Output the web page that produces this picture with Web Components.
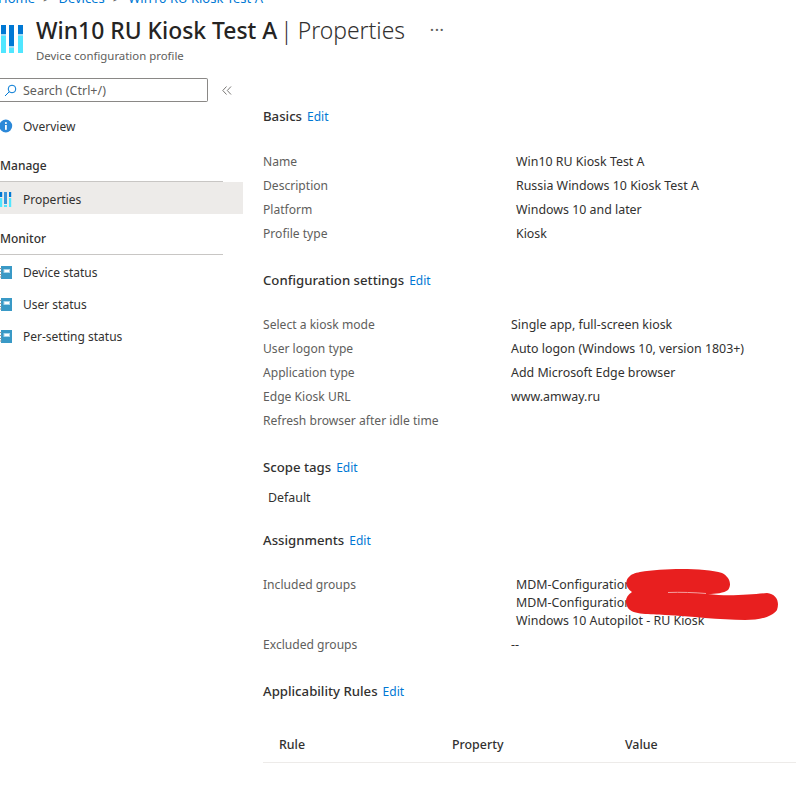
<!DOCTYPE html>
<html>
<head>
<meta charset="utf-8">
<style>
    html, body{ margin: 0; height: 100%; overflow: hidden; background: #fff; }
    body{
        font-family: "Noto Sans", "Open Sans", sans-serif;
        font-size: 12px;
        color: #323130;
        width: 796px;
        height: 803px;
        position: relative;
    }
    .page{ display: flex; }
</style>
</head>
<body>
<az-breadcrumb></az-breadcrumb>
<az-title heading="Win10 RU Kiosk Test A" blade="Properties" sub="Device configuration profile"></az-title>
<div class="page">
    <az-sidebar>
        <az-nav icon="info">Overview</az-nav>
        <az-group style="margin-top: 13px">Manage</az-group>
        <az-nav icon="bars" active>Properties</az-nav>
        <az-group style="margin-top: 14px; margin-bottom: 1px">Monitor</az-group>
        <az-nav icon="book">Device status</az-nav>
        <az-nav icon="book">User status</az-nav>
        <az-nav icon="book">Per-setting status</az-nav>
    </az-sidebar>
    <az-content>
        <az-section heading="Basics" gap="27" after="23">
            <az-row label="Name" value="Win10 RU Kiosk Test A"></az-row>
            <az-row label="Description" value="Russia Windows 10 Kiosk Test A"></az-row>
            <az-row label="Platform" value="Windows 10 and later"></az-row>
            <az-row label="Profile type" value="Kiosk"></az-row>
        </az-section>
        <az-section heading="Configuration settings" gap="26" after="23">
            <az-row col="248" label="Select a kiosk mode" value="Single app, full-screen kiosk"></az-row>
            <az-row col="248" label="User logon type" value="Auto logon (Windows 10, version 1803+)"></az-row>
            <az-row col="248" label="Application type" value="Add Microsoft Edge browser"></az-row>
            <az-row col="248" label="Edge Kiosk URL" value="www.amway.ru"></az-row>
            <az-row col="248" label="Refresh browser after idle time" value=""></az-row>
        </az-section>
        <az-section heading="Scope tags" gap="12" after="19">
            <az-row col="5" label="" value="Default"></az-row>
        </az-section>
        <az-section heading="Assignments" gap="26" after="23">
            <az-row h="18" label="Included groups" value="MDM-Configuration"></az-row>
            <az-row h="18" label="" value="MDM-Configuration"></az-row>
            <az-row label="" value="Windows 10 Autopilot - RU Kiosk"></az-row>
            <az-row col="248" label="Excluded groups" value="--"></az-row>
        </az-section>
        <az-section heading="Applicability Rules" gap="26" after="0">
            <az-table columns="Rule,Property,Value"></az-table>
        </az-section>
    </az-content>
</div>
<az-scribble></az-scribble>
<script>
const ICONS = {
    info: `<svg width="13" height="14" viewBox="0 0 13 14"><circle cx="5.8" cy="7" r="6.4" fill="#2b88d8"/><rect x="5" y="6" width="1.8" height="4.8" fill="#fff"/><rect x="5" y="3.2" width="1.8" height="1.7" fill="#fff"/></svg>`,
    bars: `<svg width="12" height="15" viewBox="0 0 12 15"><rect x="0" y="0" width="2.2" height="5" fill="#0078d4"/><rect x="0" y="6" width="2.2" height="9" fill="#50e6ff"/><rect x="4" y="0" width="3" height="12" fill="#0078d4" opacity=".75"/><rect x="4" y="13" width="3" height="2" fill="#50e6ff"/><rect x="9" y="0" width="2.2" height="5" fill="#0078d4"/><rect x="9" y="6" width="2.2" height="9" fill="#50e6ff"/></svg>`,
    book: `<svg width="13" height="13" viewBox="0 0 13 13"><rect x="1" y="0" width="11" height="13" fill="#3999c6"/><rect x="0" y="2" width="1.5" height="1" fill="#9a9a9a"/><rect x="0" y="5" width="1.5" height="1" fill="#9a9a9a"/><rect x="0" y="8" width="1.5" height="1" fill="#9a9a9a"/><rect x="0" y="10.5" width="1.5" height="1" fill="#9a9a9a"/><rect x="3.5" y="3" width="6.5" height="4" fill="#a9d5ea"/><rect x="4.5" y="4" width="4.5" height="2" fill="#fff"/></svg>`
};

class AzBreadcrumb extends HTMLElement{
    constructor(){
        super();
        this.attachShadow({ mode: 'open' });
        this.shadowRoot.innerHTML = `
            <style>
                :host{ display: block; height: 7px; overflow: hidden; }
                div{
                    display: flex;
                    gap: 8px;
                    margin: -10px 0 0 -2px;
                    line-height: 17px;
                    font-size: 13px;
                    color: #0078d4;
                    white-space: nowrap;
                }
                span.sep{ color: #605e5c; }
            </style>
            <div><span>Home</span><span class="sep">&gt;</span><span>Devices</span><span class="sep">&gt;</span><span>Win10 RU Kiosk Test A</span></div>
        `;
    }
}
customElements.define('az-breadcrumb', AzBreadcrumb);

class AzTitle extends HTMLElement{
    constructor(){
        super();
        this.attachShadow({ mode: 'open' });
    }
    connectedCallback(){
        this.shadowRoot.innerHTML = `
            <style>
                :host{ display: flex; height: 71px; box-sizing: border-box; padding-top: 10px; }
                .logo{ width: 36px; padding-top: 8px; flex: none; }
                .logo svg{ display: block; }
                h1{
                    margin: 0;
                    font-size: 22.9px;
                    line-height: 28px;
                    font-weight: 500;
                    color: #252423;
                    white-space: nowrap;
                    display: flex;
                    align-items: center;
                }
                h1 .blade{ font-weight: 300; margin-left: 3px; word-spacing: -1px; color: #323130; }
                h1 .more{ font-size: 14px; margin-left: 25px; margin-top: -3px; letter-spacing: 1px; font-weight: 600; color: #605e5c; }
                p{ margin: 3px 0 0; font-size: 11.4px; line-height: 16px; color: #605e5c; }
            </style>
            <div class="logo">
                <svg width="24" height="28" viewBox="0 0 24 28">
                    <rect x="1" y="0" width="5" height="9" fill="#0078d4"/>
                    <rect x="1" y="9" width="5" height="2" fill="#9fdcf5"/>
                    <rect x="1" y="11" width="5" height="17" fill="#50e6ff"/>
                    <rect x="9" y="0" width="5" height="21" fill="#0078d4"/>
                    <rect x="9" y="21" width="5" height="2" fill="#9fdcf5"/>
                    <rect x="9" y="23" width="5" height="5" fill="#50e6ff"/>
                    <rect x="18" y="0" width="5" height="9" fill="#0078d4"/>
                    <rect x="18" y="9" width="5" height="2" fill="#9fdcf5"/>
                    <rect x="18" y="11" width="5" height="17" fill="#50e6ff"/>
                </svg>
            </div>
            <div>
                <h1>${this.getAttribute('heading')}<span class="blade">| ${this.getAttribute('blade')}</span><span class="more">···</span></h1>
                <p>${this.getAttribute('sub')}</p>
            </div>
        `;
    }
}
customElements.define('az-title', AzTitle);

class AzSidebar extends HTMLElement{
    constructor(){
        super();
        this.attachShadow({ mode: 'open' });
        this.shadowRoot.innerHTML = `
            <style>
                :host{ display: block; width: 243px; flex: none; }
                .top{ display: flex; align-items: center; height: 24px; margin-bottom: 8px; }
                .search{
                    width: 208px;
                    height: 24px;
                    box-sizing: border-box;
                    border: 1px solid #8a8886;
                    border-left: 0;
                    border-radius: 0 2px 2px 0;
                    display: flex;
                    align-items: center;
                    gap: 6px;
                    padding-left: 4px;
                    color: #605e5c;
                    font-size: 12.5px;
                }
                .search svg{ display: block; }
                .collapse{ margin-left: 14px; display: block; }
            </style>
            <div class="top">
                <div class="search">
                    <svg width="13" height="13" viewBox="0 0 13 13" fill="none" stroke="#0078d4" stroke-width="1"><circle cx="8" cy="5" r="3.8"/><path d="M5.2 7.8L1 12"/></svg>
                    <span>Search (Ctrl+/)</span>
                </div>
                <svg class="collapse" width="10" height="9" viewBox="0 0 10 9" fill="none" stroke="#797775" stroke-width="1"><path d="M4.5 .5L.8 4.5l3.7 4M9 .5L5.3 4.5 9 8.5"/></svg>
            </div>
            <slot></slot>
        `;
    }
}
customElements.define('az-sidebar', AzSidebar);

class AzNav extends HTMLElement{
    constructor(){
        super();
        this.attachShadow({ mode: 'open' });
    }
    connectedCallback(){
        this.shadowRoot.innerHTML = `
            <style>
                :host{ display: flex; align-items: center; height: 32px; box-sizing: border-box; font-size: 12px; color: #323130; }
                :host([active]){ background: #edebe9; padding-top: 2px; }
                .ic{ width: 23px; flex: none; display: flex; }
            </style>
            <span class="ic">${ICONS[this.getAttribute('icon')]}</span><slot></slot>
        `;
    }
}
customElements.define('az-nav', AzNav);

class AzGroup extends HTMLElement{
    constructor(){
        super();
        this.attachShadow({ mode: 'open' });
        this.shadowRoot.innerHTML = `
            <style>
                :host{
                    display: block;
                    width: 223px;
                    height: 27px;
                    line-height: 22px;
                    box-sizing: border-box;
                    border-bottom: 1px solid #c8c6c4;
                    font-size: 12px;
                    font-weight: 500;
                    color: #323130;
                }
            </style>
            <slot></slot>
        `;
    }
}
customElements.define('az-group', AzGroup);

class AzContent extends HTMLElement{
    constructor(){
        super();
        this.attachShadow({ mode: 'open' });
        this.shadowRoot.innerHTML = `
            <style>
                :host{ display: block; flex: 1; min-width: 0; padding: 30px 0 0 20px; }
            </style>
            <slot></slot>
        `;
    }
}
customElements.define('az-content', AzContent);

class AzSection extends HTMLElement{
    constructor(){
        super();
        this.attachShadow({ mode: 'open' });
    }
    connectedCallback(){
        this.shadowRoot.innerHTML = `
            <style>
                :host{ display: block; margin-bottom: ${this.getAttribute('after')}px; }
                header{ display: flex; gap: 5px; height: 18px; line-height: 18px; margin-bottom: ${this.getAttribute('gap')}px; }
                h2{ margin: 0; font-size: 13.2px; line-height: 16px; font-weight: 500; color: #323130; }
                a{ font-size: 12px; color: #0078d4; }
            </style>
            <header><h2>${this.getAttribute('heading')}</h2><a>Edit</a></header>
            <slot></slot>
        `;
    }
}
customElements.define('az-section', AzSection);

class AzRow extends HTMLElement{
    constructor(){
        super();
        this.attachShadow({ mode: 'open' });
    }
    connectedCallback(){
        const col = this.getAttribute('col') || '253';
        const h = this.getAttribute('h') || '24';
        this.shadowRoot.innerHTML = `
            <style>
                :host{
                    display: grid;
                    grid-template-columns: ${col}px 1fr;
                    height: ${h}px;
                    line-height: 18px;
                    white-space: nowrap;
                }
                .k{ color: #605e5c; font-size: 12.1px; }
                .v{ color: #323130; font-size: 12.4px; }
            </style>
            <span class="k">${this.getAttribute('label')}</span><span class="v">${this.getAttribute('value')}</span>
        `;
    }
}
customElements.define('az-row', AzRow);

class AzTable extends HTMLElement{
    constructor(){
        super();
        this.attachShadow({ mode: 'open' });
    }
    connectedCallback(){
        const cells = this.getAttribute('columns').split(',').map(c => `<span>${c}</span>`).join('');
        this.shadowRoot.innerHTML = `
            <style>
                :host{
                    display: grid;
                    grid-template-columns: 173px 173px 1fr;
                    height: 36px;
                    box-sizing: border-box;
                    padding-left: 16px;
                    align-items: center;
                    border-bottom: 1px solid #edebe9;
                    font-size: 12.4px;
                    font-weight: 500;
                    color: #323130;
                }
            </style>
            ${cells}
        `;
    }
}
customElements.define('az-table', AzTable);

// red marker painted over the group names
class AzScribble extends HTMLElement{
    constructor(){
        super();
        this.attachShadow({ mode: 'open' });
        this.shadowRoot.innerHTML = `
            <style>
                :host{ position: absolute; left: 0; top: 0; width: 796px; height: 803px; pointer-events: none; }
                svg{ display: block; }
            </style>
            <svg width="796" height="803" viewBox="0 0 796 803">
                <path d="M640 572C665 568 705 568 722 573C730 577 732 585 728 590C724 593 716 594 708 594C730 597 752 594 767 593C776 594 780 601 777 610C772 617 760 620 745 620C720 620 690 616 665 615C650 614 633 615 628 608C624 601 626 596 632 592C626 588 625 582 628 578C631 574 635 573 640 572Z" fill="#e81f1f"/>
                <path d="M668 592.5C680 592 695 592.5 706 593.5" stroke="#f5a0a0" stroke-width="1" fill="none"/>
            </svg>
        `;
    }
}
customElements.define('az-scribble', AzScribble);
</script>
</body>
</html>
